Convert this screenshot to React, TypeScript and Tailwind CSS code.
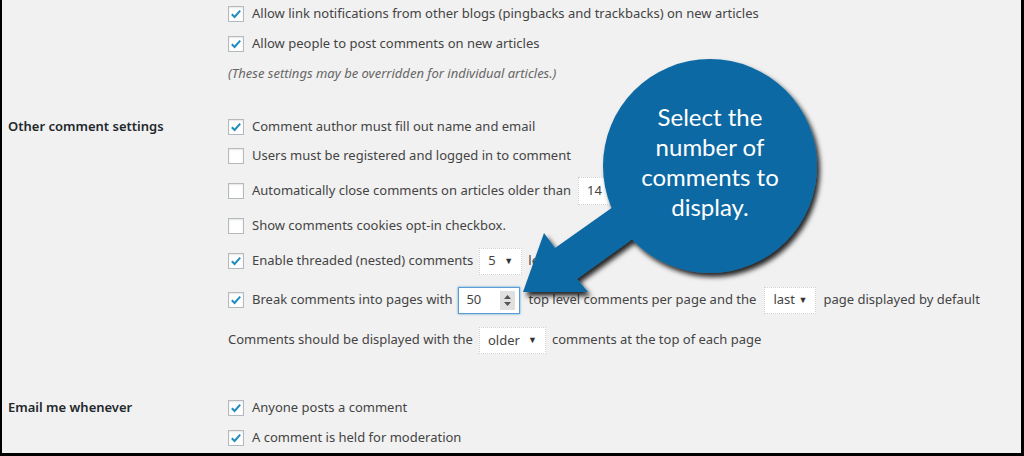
import React from "react";

const font = { fontFamily: '"Noto Sans", "Open Sans", Arial, sans-serif' };

function Box({ checked }: { checked?: boolean }) {
  return (
    <span className="inline-flex h-4 w-4 shrink-0 items-center justify-center border border-[#b4b9be] bg-white shadow-[inset_0_1px_2px_rgba(0,0,0,0.1)]">
      {checked && (
        <svg viewBox="0 0 16 16" className="h-4 w-4">
          <path d="M3.2 8.2 L6.4 11.4 L12.8 4.2" fill="none" stroke="#1e8cbe" strokeWidth="2.3" />
        </svg>
      )}
    </span>
  );
}

function Sel({ v, w, pad }: { v: string; w: string; pad?: string }) {
  return (
    <span className={`inline-flex h-[27px] items-center justify-between border border-dotted border-[#cfcfcf] bg-white pl-2 pr-2 ${w}`}>
      <span className={pad}>{v}</span>
      <span className="text-[9px] text-[#333]">▼</span>
    </span>
  );
}

function Row({ h, checked, children }: { h: string; checked?: boolean; children: React.ReactNode }) {
  return (
    <div className={`flex items-center ${h}`}>
      <Box checked={checked} />
      <div className="ml-2 flex items-center whitespace-nowrap">{children}</div>
    </div>
  );
}

export default function App() {
  return (
    <div className="h-[456px] w-[1024px] overflow-hidden bg-black pb-[3px] pl-[2px] pr-[3px]">
      <div className="relative h-full w-full overflow-hidden bg-[#f1f1f1] text-[13px] text-[#444]" style={font}>
        <div className="flex flex-col pl-[226px] pt-0 mt-[-1px]">
          <Row h="h-[30px]" checked>Allow link notifications from other blogs (pingbacks and trackbacks) on new articles</Row>
          <Row h="h-[30px]" checked>Allow people to post comments on new articles</Row>
          <div className="flex h-[30px] items-center italic text-[#666]">(These settings may be overridden for individual articles.)</div>
        </div>

        <div className="mt-[24px] flex">
          <div className="w-[226px] shrink-0 pl-[6px]">
            <div className="flex h-[28px] items-center font-semibold text-[#23282d]">Other comment settings</div>
          </div>
          <div className="flex flex-col">
            <Row h="h-[28px]" checked>Comment author must fill out name and email</Row>
            <Row h="h-[30px]">Users must be registered and logged in to comment</Row>
            <Row h="h-[40px]">
              Automatically close comments on articles older than
              <span className="ml-[7px] inline-flex h-[28px] w-[60px] items-center border border-dotted border-[#cfcfcf] bg-white pl-2">14</span>
            </Row>
            <Row h="h-[30px]">Show comments cookies opt-in checkbox.</Row>
            <Row h="h-[40px]" checked>
              Enable threaded (nested) comments
              <span className="ml-[6px]"><Sel v="5" w="w-[43px]" /></span>
              <span className="ml-[6px]">levels deep</span>
            </Row>
            <Row h="h-[38px]" checked>
              Break comments into pages with
              <span className="ml-[6px] inline-flex h-[27px] w-[62px] items-center justify-between border border-[#5b9dd9] bg-white pl-[7px] pr-[4px] shadow-[0_0_2px_rgba(30,140,190,0.8)]">
                <span>50</span>
                <span className="flex h-[19px] w-[15px] items-center justify-center bg-[#e0e0e0]">
                  <svg viewBox="0 0 15 19" className="h-[19px] w-[15px]">
                    <path d="M4 8 L7.5 4 L11 8 Z" fill="#555" />
                    <path d="M4 11 L7.5 15 L11 11 Z" fill="#555" />
                  </svg>
                </span>
              </span>
              <span className="ml-[8px]">top level comments per page and the</span>
              <span className="ml-[8px]"><Sel v="last" w="w-[52px]" /></span>
              <span className="ml-[7px]">page displayed by default</span>
            </Row>
            <div className="flex h-[42px] items-center whitespace-nowrap">
              Comments should be displayed with the
              <span className="ml-[6px]"><Sel v="older" w="w-[67px]" pad="pt-[2px]" /></span>
              <span className="ml-[6px]">comments at the top of each page</span>
            </div>
          </div>
        </div>

        <div className="mt-[32px] flex">
          <div className="w-[226px] shrink-0 pl-[6px]">
            <div className="flex h-[30px] items-center font-semibold text-[#23282d]">Email me whenever</div>
          </div>
          <div className="flex flex-col">
            <Row h="h-[30px]" checked>Anyone posts a comment</Row>
            <Row h="h-[30px]" checked>A comment is held for moderation</Row>
          </div>
        </div>

        <svg className="pointer-events-none absolute left-0 top-0 h-[453px] w-[1019px]" viewBox="0 0 1019 453">
          <defs>
            <filter id="sh" x="-20%" y="-20%" width="140%" height="140%">
              <feDropShadow dx="3" dy="4" stdDeviation="2.5" floodColor="#000" floodOpacity="0.85" />
            </filter>
          </defs>
          <g filter="url(#sh)" fill="#0b69a3">
            <polygon points="521,292 542,233 553,248 635,190 657,220 575,279 586,292" />
            <circle cx="708" cy="166" r="107" />
          </g>
        </svg>
        <div
          className="absolute left-[601px] top-[102px] w-[214px] text-center text-[24px] leading-[30px] text-white"
          style={{ fontFamily: 'Lato, "Open Sans", sans-serif' }}
        >
          Select the
          <br />
          number of
          <br />
          comments to
          <br />
          display.
        </div>
      </div>
    </div>
  );
}
